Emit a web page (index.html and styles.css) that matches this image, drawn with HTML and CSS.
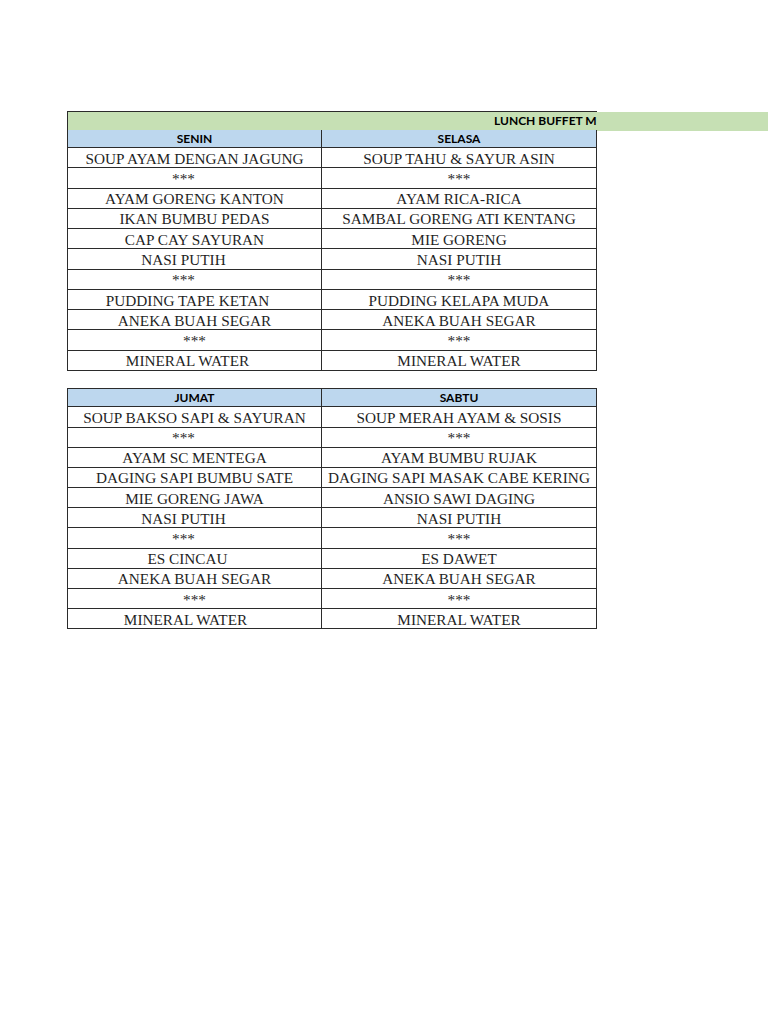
FILE: index.html
```html
<!DOCTYPE html>
<html>
<head>
<meta charset="utf-8">
<link rel="stylesheet" href="styles.css">
</head>
<body>
<div class="page">
  <div class="band">
    <div class="title"><span>LUNCH BUFFET MENU</span></div>
    <div class="band-fill"></div>
  </div>
  <div class="menu">
    <div class="head">SENIN</div><div class="head">SELASA</div>
    <div class="cell">SOUP AYAM DENGAN JAGUNG</div><div class="cell">SOUP TAHU &amp; SAYUR ASIN</div>
    <div class="cell pad-l">***</div><div class="cell">***</div>
    <div class="cell">AYAM GORENG KANTON</div><div class="cell">AYAM RICA-RICA</div>
    <div class="cell">IKAN BUMBU PEDAS</div><div class="cell">SAMBAL GORENG ATI KENTANG</div>
    <div class="cell">CAP CAY SAYURAN</div><div class="cell">MIE GORENG</div>
    <div class="cell pad-l">NASI PUTIH</div><div class="cell">NASI PUTIH</div>
    <div class="cell pad-l">***</div><div class="cell">***</div>
    <div class="cell pad-m">PUDDING TAPE KETAN</div><div class="cell">PUDDING KELAPA MUDA</div>
    <div class="cell">ANEKA BUAH SEGAR</div><div class="cell">ANEKA BUAH SEGAR</div>
    <div class="cell">***</div><div class="cell">***</div>
    <div class="cell pad-m">MINERAL WATER</div><div class="cell">MINERAL WATER</div>
  </div>

  <div class="menu second">
    <div class="head">JUMAT</div><div class="head">SABTU</div>
    <div class="cell">SOUP BAKSO SAPI &amp; SAYURAN</div><div class="cell">SOUP MERAH AYAM &amp; SOSIS</div>
    <div class="cell pad-l">***</div><div class="cell">***</div>
    <div class="cell">AYAM SC MENTEGA</div><div class="cell">AYAM BUMBU RUJAK</div>
    <div class="cell">DAGING SAPI BUMBU SATE</div><div class="cell">DAGING SAPI MASAK CABE KERING</div>
    <div class="cell">MIE GORENG JAWA</div><div class="cell">ANSIO SAWI DAGING</div>
    <div class="cell pad-l">NASI PUTIH</div><div class="cell">NASI PUTIH</div>
    <div class="cell pad-l">***</div><div class="cell">***</div>
    <div class="cell pad-m">ES CINCAU</div><div class="cell">ES DAWET</div>
    <div class="cell">ANEKA BUAH SEGAR</div><div class="cell">ANEKA BUAH SEGAR</div>
    <div class="cell">***</div><div class="cell">***</div>
    <div class="cell pad-w">MINERAL WATER</div><div class="cell">MINERAL WATER</div>
  </div>
</div>
</body>
</html>
```
FILE: styles.css
```css
html, body {
  margin: 0;
  padding: 0;
  background: #ffffff;
}

.page {
  padding: 111px 0 0 67px;
}

.band {
  display: flex;
  height: 20px;
}

.title {
  width: 530px;
  box-sizing: border-box;
  border-top: 1px solid #2b2b2b;
  border-left: 1px solid #2b2b2b;
  background: #c6e0b4;
  overflow: hidden;
  white-space: nowrap;
  padding-left: 426px;
  font-family: "Lato", "Open Sans", sans-serif;
  font-weight: 700;
  font-size: 12px;
  line-height: 18px;
  color: #000;
}

.band-fill {
  flex: 1;
  margin-top: 1px;
  background: #c6e0b4;
}

.menu {
  display: grid;
  grid-template-columns: 254px 275px;
  grid-template-rows: 18px;
  grid-auto-rows: 20.27px;
  width: max-content;
  border-left: 1px solid #2b2b2b;
  border-top: 1px solid #2b2b2b;
}

.menu > div {
  box-sizing: border-box;
  border-right: 1px solid #2b2b2b;
  border-bottom: 1px solid #2b2b2b;
  display: flex;
  align-items: center;
  justify-content: center;
  white-space: nowrap;
}

.band + .menu {
  border-top: none;
  margin-top: -1px;
}

.menu .head {
  background: #bdd7ee;
  font-family: "Lato", "Open Sans", sans-serif;
  font-weight: 700;
  font-size: 12px;
  color: #000;
}

.menu .cell {
  font-family: "Liberation Serif", "Times New Roman", serif;
  font-size: 15.25px;
  color: #1f1f1f;
  padding-top: 2px;
}

.menu .pad-l { padding-right: 22px; }
.menu .pad-m { padding-right: 14px; }
.menu .pad-w { padding-right: 18px; }

.second {
  margin-top: 17.4px;
  grid-auto-rows: 20.2px;
}
```
